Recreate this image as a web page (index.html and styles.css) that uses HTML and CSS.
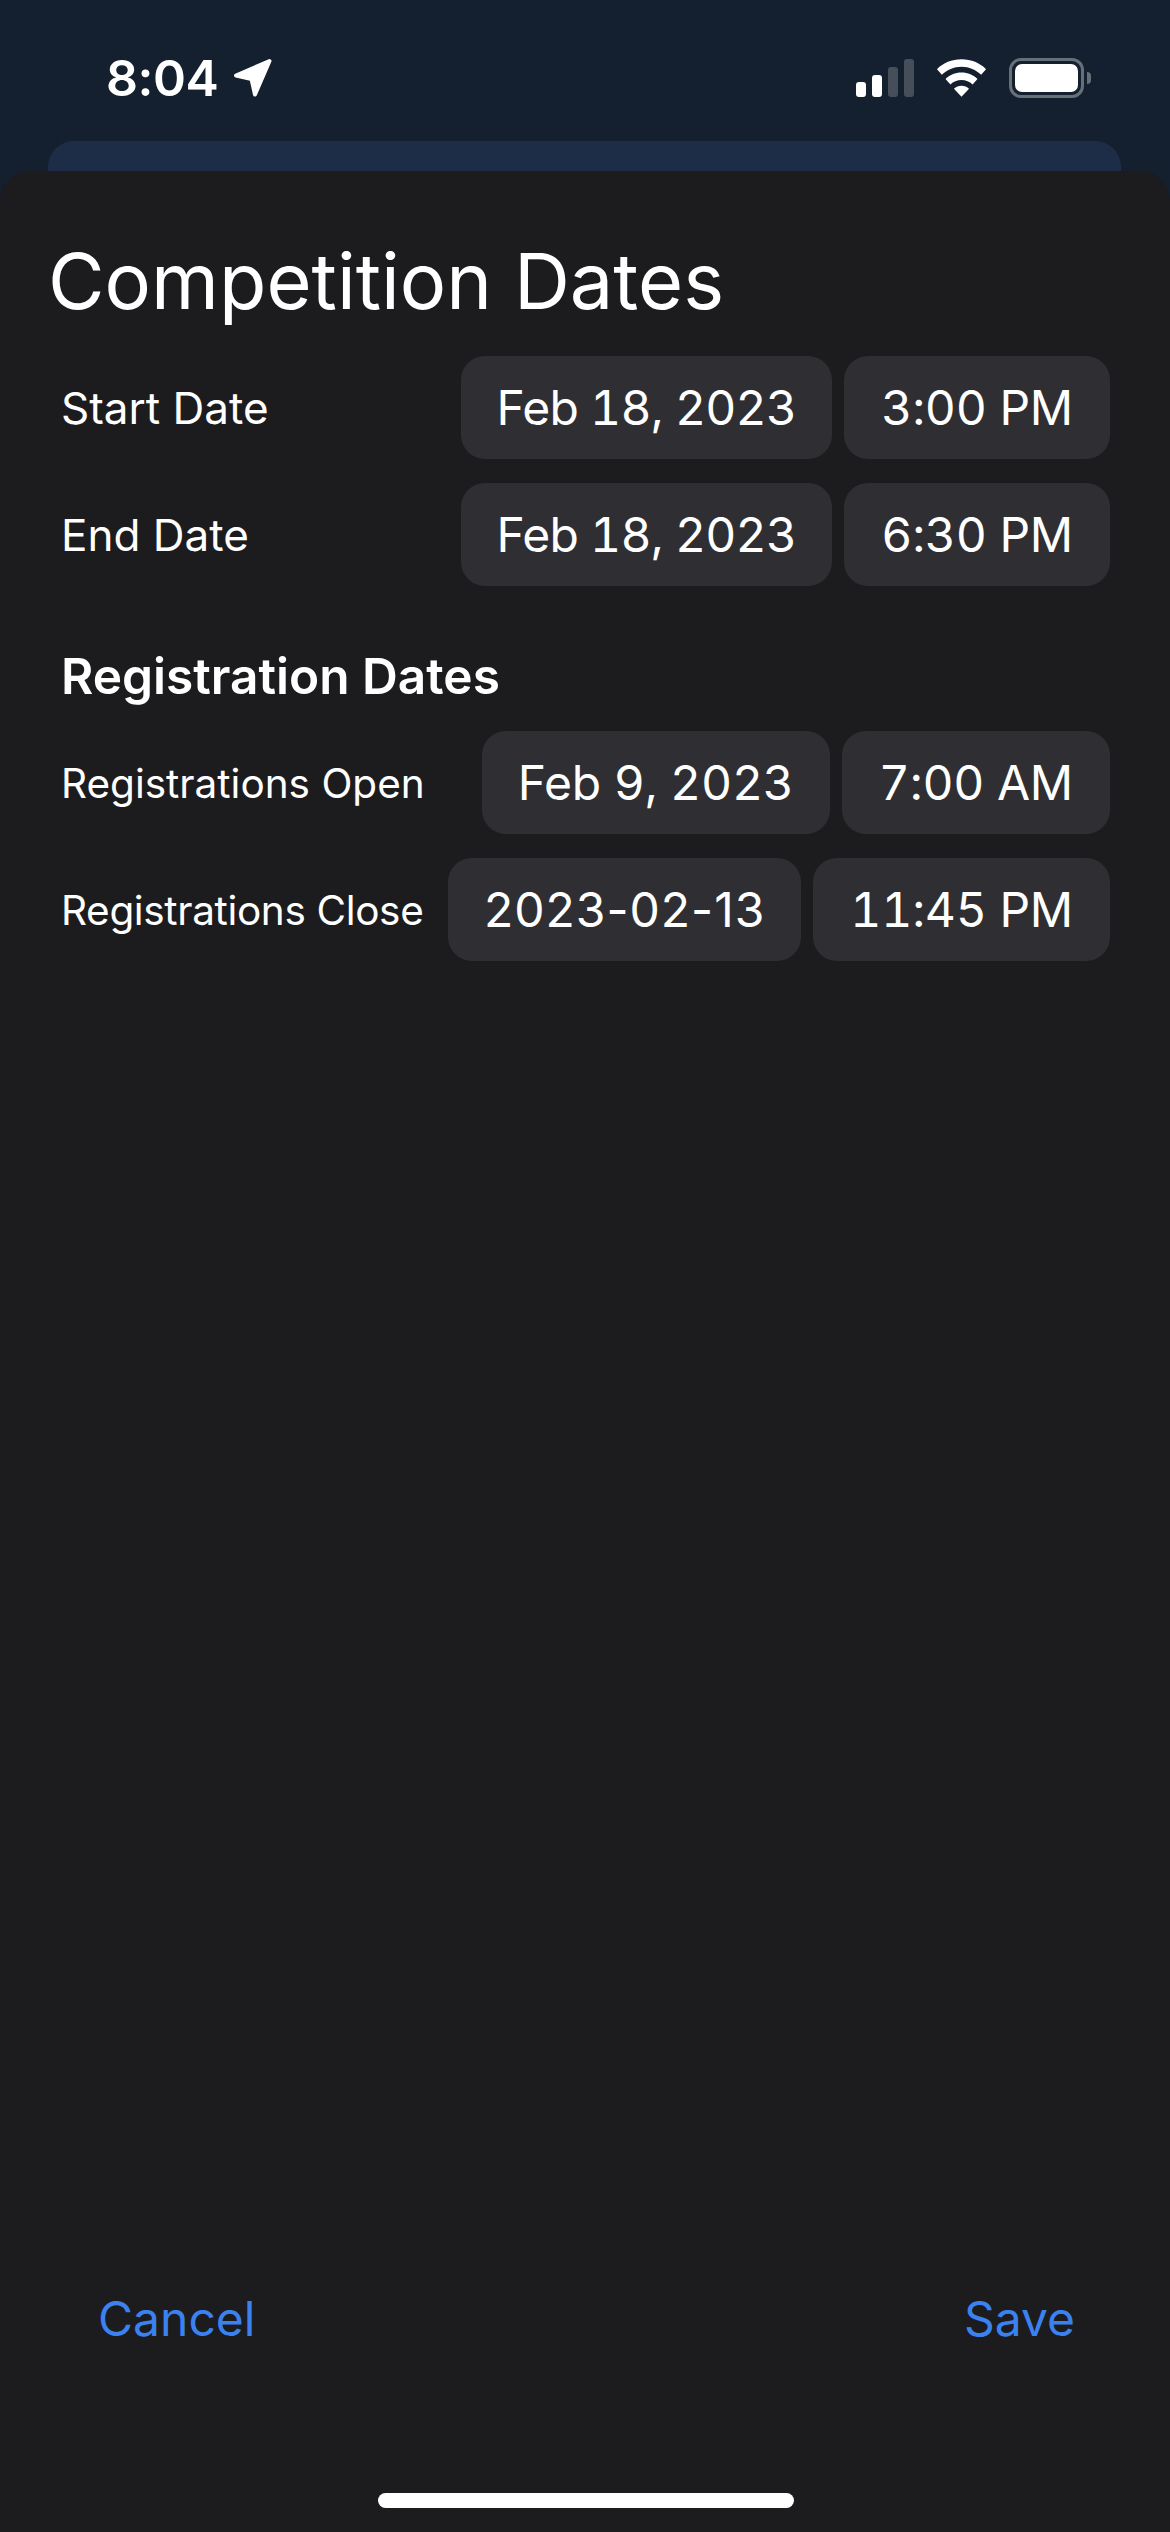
FILE: index.html
```html
<!DOCTYPE html>
<html>
<head>
    <meta charset="utf-8">
    <title>Competition Dates</title>
    <link rel="stylesheet" href="styles.css">
</head>
<body>
    <div class="screen">
        <!-- Status bar -->
        <div class="status-bar">
            <div class="status-left">
                <span class="clock">8:04</span>
                <svg class="location-icon" viewBox="0 0 40 40">
                    <path d="M36.500 3 3 17.500 18.500 21 22 36.500Z" />
                </svg>
            </div>
            <div class="status-right">
                <svg class="signal-icon" viewBox="0 0 58 38">
                    <rect x="0" y="23" width="10" height="15" rx="3" fill="#fff" />
                    <rect x="16" y="16" width="10" height="22" rx="3" fill="#fff" />
                    <rect x="32" y="8" width="10" height="30" rx="3" fill="#464f59" />
                    <rect x="48" y="0" width="10" height="38" rx="3" fill="#464f59" />
                </svg>
                <svg class="wifi-icon" viewBox="0 0 52 38">
                    <path d="M26 0C16 0 7.500 3.700 1 10l5 5.700C11.300 10.600 18.200 7.500 26 7.500s14.700 3.100 20 8.200l5-5.700C44.500 3.700 36 0 26 0Z" />
                    <path d="M26 13.500c-6.500 0-12.200 2.500-16.300 6.500l5 5.600c2.900-2.800 6.900-4.500 11.300-4.500s8.400 1.700 11.300 4.500l5-5.600c-4.100-4-9.800-6.500-16.300-6.500Z" />
                    <path d="M26 27c-3 0-5.700 1.100-7.700 3L26 38l7.700-8c-2-1.900-4.700-3-7.700-3Z" />
                </svg>
                <div class="battery">
                    <div class="battery-body"><div class="battery-fill"></div></div>
                    <div class="battery-cap"></div>
                </div>
            </div>
        </div>

        <!-- Screen behind the sheet -->
        <div class="behind-card"></div>

        <!-- Sheet -->
        <div class="sheet">
            <h1 class="sheet-title">Competition Dates</h1>

            <div class="date-row">
                <span class="date-label">Start Date</span>
                <div class="pickers">
                    <span class="pill pill-date">Feb 18, 2023</span>
                    <span class="pill pill-time">3:00 PM</span>
                </div>
            </div>
            <div class="date-row">
                <span class="date-label">End Date</span>
                <div class="pickers">
                    <span class="pill pill-date">Feb 18, 2023</span>
                    <span class="pill pill-time">6:30 PM</span>
                </div>
            </div>

            <h2 class="section-title">Registration Dates</h2>

            <div class="date-row">
                <span class="date-label small">Registrations Open</span>
                <div class="pickers">
                    <span class="pill pill-date pill-short">Feb 9, 2023</span>
                    <span class="pill pill-time">7:00 AM</span>
                </div>
            </div>
            <div class="date-row">
                <span class="date-label small tight">Registrations Close</span>
                <div class="pickers">
                    <span class="pill pill-date pill-iso">2023-02-13</span>
                    <span class="pill pill-time">11:45 PM</span>
                </div>
            </div>

            <div class="sheet-actions">
                <a class="action">Cancel</a>
                <a class="action">Save</a>
            </div>
            <div class="home-bar"><div class="home-indicator"></div></div>
        </div>
    </div>
</body>
</html>
```

FILE: styles.css
```css
* {
    box-sizing: border-box;
}

html, body {
    margin: 0;
    padding: 0;
}

body {
    background: #14202e;
    font-family: Inter, "Liberation Sans", sans-serif;
    color: #fff;
}

.screen {
    width: 1170px;
    height: 2532px;
    display: flex;
    flex-direction: column;
    overflow: hidden;
    background: linear-gradient(180deg, #14202f 0%, #131f2b 100%);
}

/* status bar */
.status-bar {
    height: 141px;
    flex-shrink: 0;
    display: flex;
    justify-content: space-between;
    align-items: flex-start;
    padding: 56px 79px 0 106px;
}

.status-left {
    display: flex;
    align-items: center;
    gap: 15px;
}

.clock {
    font-size: 50px;
    font-weight: 600;
    line-height: 44px;
    letter-spacing: -0.5px;
}

.location-icon {
    width: 40px;
    height: 40px;
    fill: #fff;
    stroke: #fff;
    stroke-width: 4;
    stroke-linejoin: round;
}

.status-right {
    display: flex;
    align-items: flex-start;
    gap: 22px;
}

.signal-icon {
    width: 58px;
    height: 38px;
    margin-top: 3px;
}

.wifi-icon {
    width: 51px;
    height: 38px;
    margin-top: 3px;
    fill: #fff;
}

.battery {
    display: flex;
    align-items: center;
    gap: 3px;
    margin-top: 2px;
}

.battery-body {
    width: 75px;
    height: 40px;
    border: 3px solid #667078;
    border-radius: 12px;
    padding: 3px;
}

.battery-fill {
    height: 100%;
    background: #fff;
    border-radius: 7px;
}

.battery-cap {
    width: 4px;
    height: 12px;
    background: #667078;
    border-radius: 0 4px 4px 0;
}

.behind-card {
    height: 30px;
    flex-shrink: 0;
    margin: 0 49px 0 48px;
    background: #1e2d47;
    border-radius: 26px 26px 0 0;
}

/* sheet */
.sheet {
    flex: 1;
    display: flex;
    flex-direction: column;
    background: #1c1c1e;
    border-radius: 30px 30px 0 0;
    padding: 0 60px 0 61px;
}

.sheet-title {
    margin: 64px 0 0 -13px;
    font-size: 77.5px;
    font-weight: 400;
    line-height: 92px;
}

.date-row {
    display: flex;
    justify-content: space-between;
    align-items: center;
    height: 103px;
    margin-top: 24px;
}

.sheet-title + .date-row {
    margin-top: 29px;
}

.date-label {
    font-size: 44px;
    white-space: nowrap;
}

.date-label.small {
    font-size: 40.5px;
    padding-top: 2px;
}

.date-label.tight {
    letter-spacing: -0.35px;
}

.pickers {
    display: flex;
    gap: 12px;
}

.pill {
    height: 103px;
    display: flex;
    align-items: center;
    justify-content: center;
    background: #2f2f33;
    border-radius: 24px;
    font-size: 48px;
    font-variant-numeric: tabular-nums;
    white-space: nowrap;
}

.pill-date {
    padding: 0 36px;
    letter-spacing: -0.8px;
}

.pill-short {
    letter-spacing: -0.2px;
}

.pill-iso {
    letter-spacing: 1px;
    font-variant-numeric: normal;
}

.pill-time {
    padding: 0 37px;
    letter-spacing: -0.2px;
}

.section-title {
    margin: 58px 0 0;
    font-size: 49.6px;
    font-weight: 600;
    line-height: 64px;
}

.section-title + .date-row {
    margin-top: 23px;
}

.sheet-actions {
    margin-top: auto;
    display: flex;
    justify-content: space-between;
    padding: 0 35px 0 37px;
}

.action {
    font-size: 48px;
    line-height: 60px;
    color: #3b82f0;
}

.home-bar {
    display: flex;
    justify-content: center;
    padding: 144px 0 24px;
}

.home-indicator {
    width: 416px;
    height: 15px;
    background: #fff;
    border-radius: 8px;
}
```
